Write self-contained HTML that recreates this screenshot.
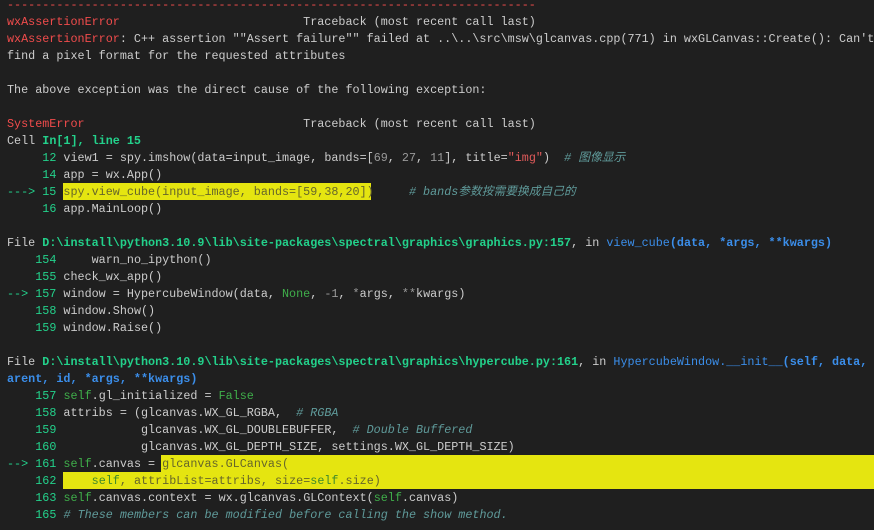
<!DOCTYPE html>
<html><head><meta charset="utf-8"><style>
html,body{margin:0;padding:0;background:#1f1f1f;width:874px;height:530px;overflow:hidden}
.hl{position:absolute;background:#e5e510}
pre{position:absolute;left:7px;top:-3px;margin:0;font-family:"Liberation Mono","Noto Sans CJK SC",monospace;font-size:11.75px;line-height:17px;color:#cccccc;white-space:pre}
.r{color:#f14c4c}.g{color:#23d18b}.gb{color:#23d18b;font-weight:bold}.b{color:#3b8eea}.bb{color:#3b8eea;font-weight:bold}
.k{color:#3fae4a}.c{color:#5f9a9a;font-style:italic}.d{color:#9a9a9a}.s{color:#e05a5a}
.y{color:#66662a}.yk{color:#3f8a2a}
</style></head><body>
<div class="hl" style="left:63px;top:183px;width:308px;height:17px"></div>
<div class="hl" style="left:161px;top:455px;width:713px;height:17px"></div>
<div class="hl" style="left:63px;top:472px;width:811px;height:17px"></div>
<pre><span class="r">---------------------------------------------------------------------------</span>
<span class="r">wxAssertionError</span>                          Traceback (most recent call last)
<span class="r">wxAssertionError</span>: C++ assertion ""Assert failure"" failed at ..\..\src\msw\glcanvas.cpp(771) in wxGLCanvas::Create(): Can't
find a pixel format for the requested attributes

The above exception was the direct cause of the following exception:

<span class="r">SystemError</span>                               Traceback (most recent call last)
Cell <span class="gb">In[1], line 15</span>
     <span class="g">12</span> view1 = spy.imshow(data=input_image, bands=[<span class="d">69</span>, <span class="d">27</span>, <span class="d">11</span>], title=<span class="s">"img"</span>)  <span class="c"># 图像显示</span>
     <span class="g">14</span> app = wx.App()
<span class="g">---&gt; 15</span> <span class="y">spy.view_cube(input_image, bands=[59,38,20])</span>     <span class="c"># bands参数按需要换成自己的</span>
     <span class="g">16</span> app.MainLoop()

File <span class="gb">D:\install\python3.10.9\lib\site-packages\spectral\graphics\graphics.py:157</span>, in <span class="b">view_cube</span><span class="bb">(data, *args, **kwargs)</span>
    <span class="g">154</span>     warn_no_ipython()
    <span class="g">155</span> check_wx_app()
<span class="g">--&gt; 157</span> window = HypercubeWindow(data, <span class="k">None</span>, <span class="d">-1</span>, <span class="d">*</span>args, <span class="d">**</span>kwargs)
    <span class="g">158</span> window.Show()
    <span class="g">159</span> window.Raise()

File <span class="gb">D:\install\python3.10.9\lib\site-packages\spectral\graphics\hypercube.py:161</span>, in <span class="b">HypercubeWindow.__init__</span><span class="bb">(self, data, p</span>
<span class="bb">arent, id, *args, **kwargs)</span>
    <span class="g">157</span> <span class="k">self</span>.gl_initialized = <span class="k">False</span>
    <span class="g">158</span> attribs = (glcanvas.WX_GL_RGBA,  <span class="c"># RGBA</span>
    <span class="g">159</span>            glcanvas.WX_GL_DOUBLEBUFFER,  <span class="c"># Double Buffered</span>
    <span class="g">160</span>            glcanvas.WX_GL_DEPTH_SIZE, settings.WX_GL_DEPTH_SIZE)
<span class="g">--&gt; 161</span> <span class="k">self</span>.canvas = <span class="y">glcanvas.GLCanvas(</span>
    <span class="g">162</span> <span class="y">    <span class="yk">self</span>, attribList=attribs, size=<span class="yk">self</span>.size)</span>
    <span class="g">163</span> <span class="k">self</span>.canvas.context = wx.glcanvas.GLContext(<span class="k">self</span>.canvas)
    <span class="g">165</span> <span class="c"># These members can be modified before calling the show method.</span>
</pre>
</body></html>
